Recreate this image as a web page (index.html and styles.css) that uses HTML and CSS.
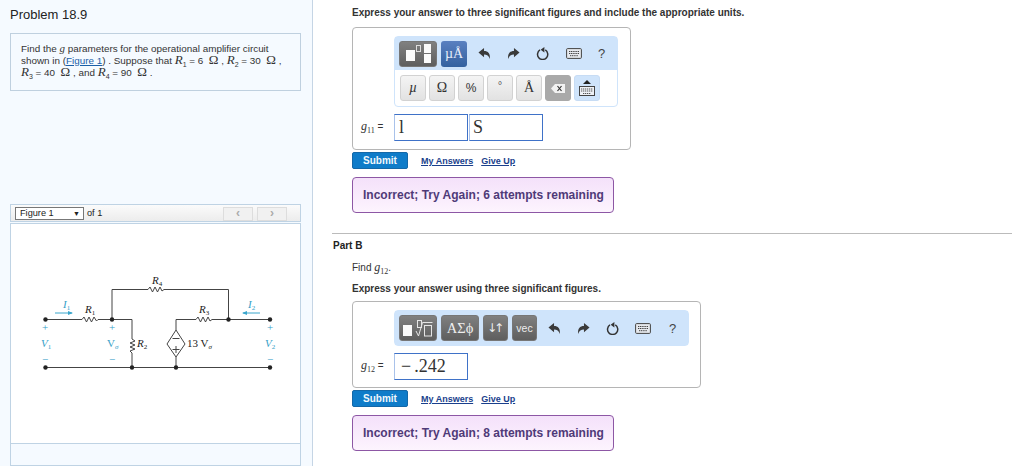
FILE: index.html
```html
<!DOCTYPE html>
<html lang="en">
<head>
<meta charset="utf-8">
<title>Problem 18.9</title>
<link rel="stylesheet" href="styles.css">
</head>
<body>
<svg class="defs" width="0" height="0" aria-hidden="true">
  <defs>
    <symbol id="undo" viewBox="0 0 14 14"><path d="M0.500 6 L6.500 1 V4.300 C10.800 4.300 13.500 7 12.800 13 C11.800 9.500 9.500 8.200 6.500 8.200 V11 Z" fill="#3a3a3a"/></symbol>
    <symbol id="redo" viewBox="0 0 14 14"><path d="M13.500 6 L7.500 1 V4.300 C3.200 4.300 0.500 7 1.200 13 C2.200 9.500 4.500 8.200 7.500 8.200 V11 Z" fill="#3a3a3a"/></symbol>
    <symbol id="reset" viewBox="0 0 14 14"><path d="M4.300 3.200 A5.500 5.500 0 1 0 10 3.200" fill="none" stroke="#333" stroke-width="1.600"/><path d="M9 0 L5 3 L9 5.800 Z" fill="#333"/></symbol>
    <symbol id="kbd" viewBox="0 0 16 11"><rect x=".6" y=".6" width="14.800" height="9.800" rx="1" fill="#e6e9ee" stroke="#444" stroke-width="1"/><path d="M3 3.500 H13 M3 5.500 H13 M4 7.700 H12" stroke="#444" stroke-width="1" stroke-dasharray="1.200 .6"/></symbol>
  </defs>
</svg>
<div class="page">
  <aside class="left">
    <h1 class="title">Problem 18.9</h1>
    <div class="problem">
      Find the <i class="gvar">g</i> parameters for the operational amplifier circuit<br>
      shown in <span class="paren">(<a href="#">Figure 1</a>)</span> . Suppose that <i class="mvar">R</i><sub>1</sub> = 6 &nbsp;<span class="ohm">Ω</span> , <i class="mvar">R</i><sub>2</sub> = 30 &nbsp;<span class="ohm">Ω</span> ,<br>
      <i class="mvar">R</i><sub>3</sub> = 40 &nbsp;<span class="ohm">Ω</span> , and <i class="mvar">R</i><sub>4</sub> = 90 &nbsp;<span class="ohm">Ω</span> .
    </div>
    <div class="figbar">
      <div class="figselect"><span>Figure 1</span><span class="caret">▼</span></div>
      <span class="ofone">of 1</span>
      <div class="pager"><span class="pagebtn">‹</span><span class="pagebtn">›</span></div>
    </div>
    <div class="figure">
      <svg class="circuit" width="289" height="219" viewBox="11 224 289 219">
        <g fill="none" stroke="#444" stroke-width="1">
          <path d="M45 319.500H82L84 317 86.500 322 89 317 91.500 322 94 317 96.500 321 98 319.500H132V339L135 341 130 343 135 345 130 347 135 349 130 351 132 353V367.500"/>
          <path d="M112 319.500V289.500H148L150 287 152.500 292 155 287 157.500 292 160 287 162 291 164 289.500H228.500V319.500"/>
          <path d="M176 330V319.500H196L198 317 200.500 322 203 317 205.500 322 208 317 210 321 212 319.500H270"/>
          <path d="M45 367.500H270"/>
          <path d="M176 330 L185 344 176 357 167 344 Z"/>
          <path d="M176 357V367.500"/>
          <path d="M172.500 338.500H179.500 M172.500 349.500H179.500 M176 346V353"/>
        </g>
        <g fill="#222">
          <circle cx="45.500" cy="319.500" r="2.200"/><circle cx="112" cy="319.500" r="2.200"/><circle cx="228.500" cy="319.500" r="2.200"/><circle cx="270" cy="319.500" r="2.200"/>
          <circle cx="45.500" cy="367.500" r="2.200"/><circle cx="132" cy="367.500" r="2.200"/><circle cx="176" cy="367.500" r="2.200"/><circle cx="270" cy="367.500" r="2.200"/>
        </g>
        <g fill="none" stroke="#3aa6cc" stroke-width="1">
          <path d="M55 313H72"/><path d="M260 313H243"/>
        </g>
        <g fill="#3aa6cc">
          <path d="M73 313L68 311V315Z"/><path d="M242 313L247 311V315Z"/>
        </g>
        <g class="cyan">
          <text x="63" y="308" class="cv">I<tspan class="csub" dy="2">1</tspan></text>
          <text x="248" y="308" class="cv">I<tspan class="csub" dy="2">2</tspan></text>
          <text x="42" y="331" class="mark">+</text><text x="109" y="331" class="mark">+</text><text x="267" y="331" class="mark">+</text>
          <text x="41" y="347" class="cv">V<tspan class="csub" dy="2">1</tspan></text>
          <text x="107" y="347">V<tspan class="csub ital" dy="2">σ</tspan></text>
          <text x="265" y="347" class="cv">V<tspan class="csub" dy="2">2</tspan></text>
          <text x="42" y="363" class="mark">−</text><text x="109" y="363" class="mark">−</text><text x="267" y="363" class="mark">−</text>
        </g>
        <g class="ink">
          <text x="85" y="313" class="cv">R<tspan class="csub" dy="2">1</tspan></text>
          <text x="152" y="284" class="cv">R<tspan class="csub" dy="2">4</tspan></text>
          <text x="199" y="313" class="cv">R<tspan class="csub" dy="2">3</tspan></text>
          <text x="137" y="347" class="cv">R<tspan class="csub" dy="2">2</tspan></text>
          <text x="187" y="347">13 V<tspan class="csub ital" dy="2">σ</tspan></text>
        </g>
      </svg>
      <div class="figfoot"></div>
    </div>
  </aside>

  <main class="right">
    <section class="part">
      <p class="lead">Express your answer to three significant figures and include the appropriate units.</p>
      <div class="answer answer-a">
        <div class="toolbar">
          <div class="tools">
            <span class="tb dark tmpl"><span class="sq big"></span><span class="col"><span class="sq outline"></span></span><span class="col"><span class="sq mid"></span><span class="sq mid"></span></span></span>
            <span class="tb blue">µÅ</span>
            <span class="icons">
              <svg class="ic"><use href="#undo"/></svg>
              <svg class="ic"><use href="#redo"/></svg>
              <svg class="ic"><use href="#reset"/></svg>
              <svg class="ickb"><use href="#kbd"/></svg>
              <span class="help">?</span>
            </span>
          </div>
          <div class="keys">
            <span class="key it">µ</span>
            <span class="key">Ω</span>
            <span class="key sans">%</span>
            <span class="key small">°</span>
            <span class="key">Å</span>
            <span class="key del"><svg width="14" height="9" viewBox="0 0 14 9"><path d="M4 0H14V9H4L0 4.500Z" fill="#f2f2f2"/><path d="M6.500 2L10.500 7M10.500 2L6.500 7" stroke="#333" stroke-width="1.200"/></svg></span>
            <span class="key kb"><svg width="18" height="18" viewBox="0 0 18 18"><path d="M9 1L13 5H5Z" fill="#222"/><rect x="1.500" y="7.500" width="15" height="9" fill="#eef1f6" stroke="#444"/><path d="M3 10H15M3 12H15M5 14.500H13" stroke="#555" stroke-dasharray="1.300 .7"/></svg></span>
          </div>
        </div>
        <div class="inputrow">
          <span class="varlabel"><i>g</i><sub>11</sub> =</span>
          <span class="field">l</span><span class="field unit">S</span>
        </div>
      </div>
      <div class="actions">
        <span class="submit">Submit</span>
        <a class="link first" href="#">My Answers</a>
        <a class="link" href="#">Give Up</a>
      </div>
      <div class="msg">Incorrect; Try Again; 6 attempts remaining</div>
    </section>

    <hr class="rule">

    <section class="partb">
      <h2 class="parthead">Part B</h2>
      <p class="find">Find <i>g</i><sub>12</sub>.</p>
      <p class="lead second">Express your answer using three significant figures.</p>
      <div class="answer answer-b">
        <div class="toolbar single">
          <div class="tools">
            <span class="tb dark tmpl2"><span class="sq big"></span><svg width="18" height="17" viewBox="0 0 18 17"><path d="M1 11L3.500 16 7.500 2.500H17.500" fill="none" stroke="#e6e6e6"/><rect x="2.500" y=".5" width="4" height="7" fill="none" stroke="#e6e6e6"/><rect x="9.500" y="5.500" width="7" height="10.500" fill="none" stroke="#e6e6e6"/></svg></span>
            <span class="tb dark greek">ΑΣϕ</span>
            <span class="tb dark arrows">↓↑</span>
            <span class="tb dark vec">vec</span>
            <span class="icons wide">
              <svg class="ic"><use href="#undo"/></svg>
              <svg class="ic"><use href="#redo"/></svg>
              <svg class="ic"><use href="#reset"/></svg>
              <svg class="ickb"><use href="#kbd"/></svg>
              <span class="help">?</span>
            </span>
          </div>
        </div>
        <div class="inputrow">
          <span class="varlabel"><i>g</i><sub>12</sub> =</span>
          <span class="field"><span class="minus">−</span>.242</span>
        </div>
      </div>
      <div class="actions">
        <span class="submit">Submit</span>
        <a class="link first" href="#">My Answers</a>
        <a class="link" href="#">Give Up</a>
      </div>
      <div class="msg">Incorrect; Try Again; 8 attempts remaining</div>
    </section>
  </main>
</div>
</body>
</html>
```
FILE: styles.css
```css
* { box-sizing: border-box; }
html, body { margin: 0; padding: 0; }
body { width: 1024px; height: 466px; overflow: hidden; background: #fff; font-family: "Liberation Sans", Arial, sans-serif; color: #333; }
.defs { display: block; height: 0; }
.page { display: flex; height: 466px; }
a { color: #1a4f9c; }

.left { width: 313px; flex: none; height: 466px; background: #f5faff; border-right: 1px solid #c5d5e5; padding: 0 11px 0 10px; display: flex; flex-direction: column; }
.title { margin: 8px 0 0; font-size: 13px; line-height: 14px; font-weight: 400; color: #222; }
.problem { margin-top: 11px; height: 58px; border: 1px solid #bfd0df; padding: 9px 10px 0; font-size: 9.900px; line-height: 12px; color: #333; white-space: nowrap; }
.problem sub { font-size: 7px; line-height: 0; }
.gvar { font-family: "Liberation Serif", serif; font-size: 11px; line-height: 0; }
.mvar { font-family: "Liberation Serif", serif; font-size: 13px; line-height: 0; }
.ohm { font-family: "Liberation Serif", serif; font-size: 13px; line-height: 0; }
.problem a { color: #1a5fa8; }
.figbar { margin-top: 113px; height: 18px; border: 1px solid #bfd3e4; background: linear-gradient(#fbfbfb, #ececec); display: flex; align-items: center; padding-left: 4px; font-size: 9.200px; color: #222; }
.figselect { width: 69px; height: 13px; border: 1px solid #777; background: #fff; display: flex; justify-content: space-between; align-items: center; padding: 0 3px 0 4px; line-height: 11px; }
.caret { font-size: 7px; }
.ofone { margin-left: 3px; }
.pager { margin-left: auto; margin-right: 13px; display: flex; gap: 4px; align-self: flex-start; margin-top: 2px; }
.pagebtn { width: 30px; height: 14px; border: 1px solid #ddd; background: #f1f1f1; color: #aaa; font-size: 12px; font-weight: 700; text-align: center; line-height: 11px; }
.figure { margin-top: 1px; height: 243px; border: 1px solid #bfd3e4; background: #fff; display: flex; flex-direction: column; }
.circuit { display: block; flex: none; }
.circuit text { font-family: "Liberation Serif", serif; font-size: 11px; }
.circuit .cv { font-style: italic; }
.circuit .csub { font-size: 7px; font-style: normal; }
.circuit .ital { font-style: italic; }
.circuit .mark { font-size: 11px; }
.cyan text { fill: #35a0c8; }
.ink text { fill: #222; }
.figfoot { flex: 1; border-top: 1px solid #bfd3e4; background: #f5faff; }

.right { flex: 1; padding: 0 12px 0 19px; min-width: 0; }
.part { padding-left: 20px; }
.partb { padding-left: 20px; }
.lead { margin: 0; padding-top: 7px; font-size: 10px; line-height: 12px; font-weight: 700; color: #333; }
.answer { margin-top: 8px; border: 1px solid #b5b5b5; border-radius: 4px; padding: 8px 12px 8px 41px; background: #fff; }
.answer-a { width: 279px; height: 123px; }
.answer-b { width: 349px; height: 87px; margin-top: 6px; }
.toolbar { width: 224px; height: 71px; border: 1px solid #cfe4fb; border-radius: 4px; background: #fff; }
.toolbar.single { width: 295px; height: 36px; background: #cfe4fb; }
.tools { height: 33px; background: #cfe4fb; display: flex; align-items: center; padding-left: 4px; gap: 4px; }
.single .tools { height: 34px; }
.tb { height: 26px; border-radius: 3px; display: flex; align-items: center; justify-content: center; flex: none; color: #eee; }
.dark { background: linear-gradient(#808080, #5e5e5e); border: 1px solid #777; }
.blue { width: 26px; background: linear-gradient(#5a80c0, #34619f); color: #e8eefa; font-family: "Liberation Serif", serif; font-size: 14px; }
.tmpl { width: 38px; gap: 1px; }
.tmpl2 { width: 38px; gap: 3px; }
.greek { width: 38px; font-family: "Liberation Serif", serif; font-size: 14.500px; }
.arrows { width: 25px; font-family: "DejaVu Sans", sans-serif; font-size: 12px; letter-spacing: -3px; padding-right: 3px; }
.vec { width: 25px; font-size: 10.500px; }
.col { display: flex; flex-direction: column; gap: 1px; }
.sq { display: block; background: #fafafa; }
.sq.big { width: 9px; height: 11px; margin-top: 4px; }
.sq.mid { width: 7px; height: 9px; }
.sq.outline { width: 5px; height: 7px; background: none; border: 1px solid #ddd; margin-bottom: 11px; margin-right: 2px; }
.icons { display: flex; align-items: center; margin-left: 7px; gap: 16px; }
.icons.wide { margin-left: 7px; }
.ic { width: 13px; height: 13px; display: block; flex: none; }
.ickb { width: 16px; height: 11px; display: block; flex: none; margin-left: 1px; }
.icons.wide .ickb { margin-left: 0; }
.help { font-size: 13px; color: #444; margin-left: 0; }
.icons.wide .help { margin-left: 2px; }
.keys { display: flex; gap: 3px; padding: 5px 0 0 5px; }
.key { width: 26px; height: 26px; border: 1px solid #d2d2d2; border-radius: 3px; background: linear-gradient(#f4f4f4, #e2e2e2); display: flex; align-items: center; justify-content: center; font-family: "Liberation Serif", serif; font-size: 14px; color: #333; }
.key.it { font-style: italic; }
.key.sans { font-family: "Liberation Sans", sans-serif; font-size: 12px; }
.key.small { align-items: flex-start; font-size: 10px; padding-top: 4px; }
.key.del { background: #a9a9a9; border-color: #a9a9a9; }
.key.kb { background: #cfe4fb; border-color: #c7dcf4; }
.inputrow { display: flex; align-items: center; margin-top: 7px; height: 27px; margin-left: -33px; }
.varlabel { width: 33px; flex: none; font-size: 10px; color: #333; white-space: nowrap; padding-bottom: 2px; }
.varlabel i { font-family: "Liberation Serif", serif; font-size: 12px; }
.varlabel sub { font-family: "Liberation Serif", serif; font-size: 8px; line-height: 0; }
.field { width: 74px; height: 27px; margin-right: 1px; border: 1px solid #3f72c8; border-left-color: #a9c2ea; background: #fff; padding-left: 4px; font-family: "Liberation Serif", serif; font-size: 18px; line-height: 25px; color: #333; }
.field.unit { padding-left: 3px; }
.minus { margin: 0 3px 0 2px; }
.actions { display: flex; align-items: center; margin-top: 2px; height: 17px; font-weight: 700; }
.submit { width: 56px; height: 17px; background: #0f7cc9; border: 1px solid #1468a8; border-radius: 2px; color: #f2f8fc; text-align: center; font-size: 10px; line-height: 15px; }
.link { margin-left: 8px; color: #1a3f8c; font-size: 9px; font-weight: 700; }
.link.first { margin-left: 13px; }
.msg { margin-top: 8px; width: 262px; height: 36px; border: 1px solid #8d57a5; border-radius: 4px; background: linear-gradient(#f4e1fa, #fdf4fe); padding-left: 10px; font-size: 12px; line-height: 34px; font-weight: 700; color: #4f3a78; white-space: nowrap; }
.rule { margin: 20px 0 0; height: 0; border: 0; border-top: 1px solid #bbb; }
.parthead { margin: 6px 0 0 -19px; font-size: 10px; line-height: 12px; font-weight: 700; color: #222; }
.find { margin: 9px 0 0; font-size: 10px; line-height: 12px; color: #333; }
.find i { font-family: "Liberation Serif", serif; font-size: 12px; }
.find sub { font-family: "Liberation Serif", serif; font-size: 8px; line-height: 0; }
.lead.second { padding-top: 9px; }
```
